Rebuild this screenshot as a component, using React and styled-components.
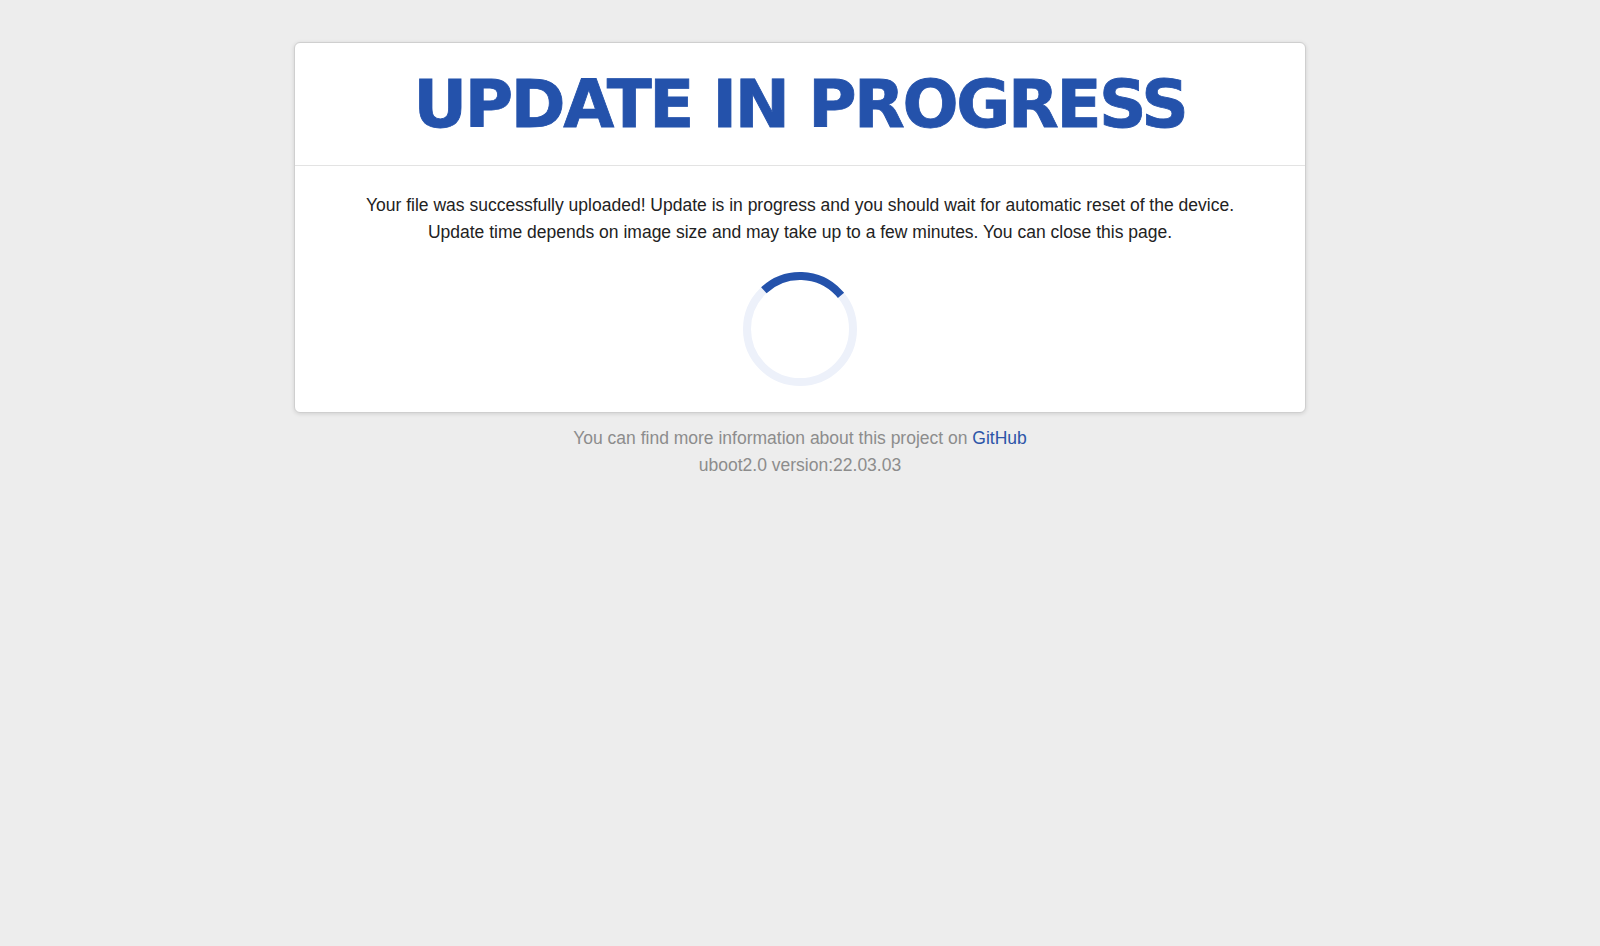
import React from "react";
import styled, { createGlobalStyle } from "styled-components";

const GlobalStyle = createGlobalStyle`
  html, body {
    margin: 0;
    padding: 0;
    background: #ededed;
    font-family: "Liberation Sans", Arial, sans-serif;
  }
`;

const Page = styled.div`
  min-height: 946px;
  padding-top: 42px;
  box-sizing: border-box;
`;

const Card = styled.div`
  width: 1012px;
  margin: 0 auto;
  background: #fff;
  border: 1px solid #cfcfcf;
  border-radius: 6px;
  box-shadow: 0 1px 4px rgba(0, 0, 0, 0.12);
  box-sizing: border-box;
`;

const Header = styled.div`
  height: 122px;
  display: flex;
  align-items: center;
  justify-content: center;
  border-bottom: 1px solid #e3e3e3;
`;

const Title = styled.h1`
  margin: 0;
  font-family: "DejaVu Sans", Verdana, sans-serif;
  font-weight: bold;
  font-size: 66px;
  letter-spacing: -2.4px;
  color: #2452ab;
  -webkit-text-stroke: 0.8px #2452ab;
`;

const Body = styled.div`
  padding: 26px 20px 25px;
  display: flex;
  flex-direction: column;
  align-items: center;
`;

const Message = styled.p`
  margin: 0;
  text-align: center;
  font-size: 17.5px;
  line-height: 27px;
  color: #222;
`;

const Spinner = styled.svg`
  margin-top: 25px;
  width: 116px;
  height: 116px;
`;

const Footer = styled.div`
  margin-top: 12px;
  text-align: center;
  font-size: 17.5px;
  line-height: 27px;
  color: #8c8c8c;
`;

const Link = styled.a`
  color: #2c55a8;
  text-decoration: none;
`;

const App = () => {
  const r = 53;
  const c = 2 * Math.PI * r;
  return (
    <>
      <GlobalStyle />
      <Page>
        <Card>
          <Header>
            <Title>UPDATE IN PROGRESS</Title>
          </Header>
          <Body>
            <Message>
              Your file was successfully uploaded! Update is in progress and you should wait for automatic reset of the device.
              <br />
              Update time depends on image size and may take up to a few minutes. You can close this page.
            </Message>
            <Spinner viewBox="0 0 116 116">
              <circle cx="58" cy="58" r={r} fill="none" stroke="#edf1fa" strokeWidth="8" />
              <circle
                cx="58"
                cy="58"
                r={r}
                fill="none"
                stroke="#2452ab"
                strokeWidth="8"
                strokeDasharray={`${c * 0.26} ${c}`}
                transform="rotate(-133 58 58)"
              />
            </Spinner>
          </Body>
        </Card>
        <Footer>
          You can find more information about this project on <Link href="#">GitHub</Link>
          <br />
          uboot2.0 version:22.03.03
        </Footer>
      </Page>
    </>
  );
};

export default App;
